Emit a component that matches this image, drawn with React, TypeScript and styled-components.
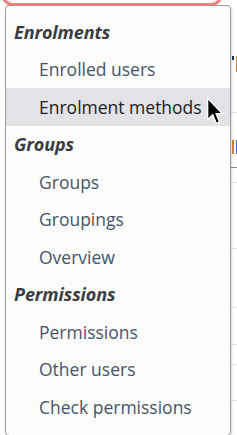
import React from 'react';
import styled, { createGlobalStyle, css } from 'styled-components';

const GlobalStyle = createGlobalStyle`
  html, body {
    margin: 0;
    padding: 0;
    background: #ffffff;
  }
  body {
    font-family: 'Open Sans', 'Noto Sans', 'Liberation Sans', sans-serif;
    -webkit-font-smoothing: antialiased;
  }
`;

const Page = styled.div`
  position: relative;
  width: 237px;
  height: 435px;
  overflow: hidden;
  box-sizing: border-box;
  padding: 5px 0 0 5px;
  display: flex;
  align-items: flex-start;
  background: #ffffff;
`;

// focus ring of the button the menu hangs from, mostly hidden behind it
const FocusRing = styled.div`
  position: absolute;
  left: 1px;
  top: -30px;
  width: 216px;
  height: 30px;
  border: 3px solid rgba(239, 83, 80, 0.75);
  border-radius: 12px;
`;

const Menu = styled.div`
  position: relative;
  z-index: 1;
  width: 224px;
  height: 422px;
  flex: none;
  display: flex;
  flex-direction: column;
  padding-top: 7px;
  box-sizing: content-box;
  background: #fcfcfa;
  border: 1px solid #9c9c9c;
  border-radius: 4px;
  box-shadow: 1px 1px 2px rgba(0, 0, 0, 0.15);
`;

const Row = styled.div<{ $active?: boolean }>`
  height: 37.5px;
  flex: none;
  display: flex;
  align-items: center;
  white-space: nowrap;
  ${({ $active }) =>
    $active &&
    css`
      background: #e2e2e7;
    `}
`;

const Header = styled(Row)`
  padding-left: 8px;
  font-size: 18px;
  font-weight: 700;
  font-style: italic;
  letter-spacing: -0.1px;
  color: #3a3d42;
`;

const Item = styled(Row)`
  padding-left: 33px;
  font-size: 17.5px;
  color: ${({ $active }) => ($active ? '#1e2125' : '#46546a')};
`;

// what is left of the page table to the right of the menu
const PageEdge = styled.div`
  flex: 1;
  margin-top: -5px;
  display: flex;
  flex-direction: column;
`;

const EdgeCell = styled.div<{ $h: number; $line?: string }>`
  height: ${({ $h }) => $h}px;
  flex: none;
  display: flex;
  align-items: flex-start;
  gap: 2px;
  padding-left: 1px;
  border-bottom: ${({ $line }) => ($line ? `1px solid ${$line}` : 'none')};
`;

const EdgeMark = styled.div<{ $h: number; $color: string }>`
  width: 2px;
  height: ${({ $h }) => $h}px;
  background: ${({ $color }) => $color};
`;

const Cursor = styled.svg`
  position: absolute;
  z-index: 2;
  left: 207px;
  top: 97px;
`;

const sections = [
  { title: 'Enrolments', items: ['Enrolled users', 'Enrolment methods'] },
  { title: 'Groups', items: ['Groups', 'Groupings', 'Overview'] },
  { title: 'Permissions', items: ['Permissions', 'Other users', 'Check permissions'] },
];

const App = () => {
  return (
    <Page>
      <GlobalStyle />
      <FocusRing />
      <Menu>
        {sections.map((section) => (
          <React.Fragment key={section.title}>
            <Header>{section.title}</Header>
            {section.items.map((item) => (
              <Item key={item} $active={item === 'Enrolment methods'}>
                {item}
              </Item>
            ))}
          </React.Fragment>
        ))}
      </Menu>
      <PageEdge>
        <EdgeCell $h={56} />
        <EdgeCell $h={18}>
          <EdgeMark $h={4} $color='#1d3557' />
          <EdgeMark $h={16} $color='#d9822b' />
        </EdgeCell>
        <EdgeCell $h={38} $line='#dddddd' />
        <EdgeCell $h={27} />
        <EdgeCell $h={14}>
          <EdgeMark $h={14} $color='#d9822b' />
          <EdgeMark $h={14} $color='#3b6fc4' />
        </EdgeCell>
        <EdgeCell $h={13} $line='#8a8a8a' />
        <EdgeCell $h={14} $line='#e2e2e2' />
        <EdgeCell $h={65} $line='#e2e2e2' />
        <EdgeCell $h={58} $line='#e2e2e2' />
        <EdgeCell $h={36} $line='#e2e2e2' />
        <EdgeCell $h={19} $line='#e2e2e2' />
        <EdgeCell $h={35} $line='#e2e2e2' />
      </PageEdge>
      <Cursor width='16' height='28' viewBox='0 0 12 20'>
        <path
          d='M0.5 0.5 L0.5 16.5 L4.3 12.8 L7 19.3 L9.4 18.3 L6.8 12 L11.6 12 Z'
          fill='#000'
          stroke='#fff'
          strokeWidth='1'
          strokeLinejoin='miter'
        />
      </Cursor>
    </Page>
  );
};

export default App;
